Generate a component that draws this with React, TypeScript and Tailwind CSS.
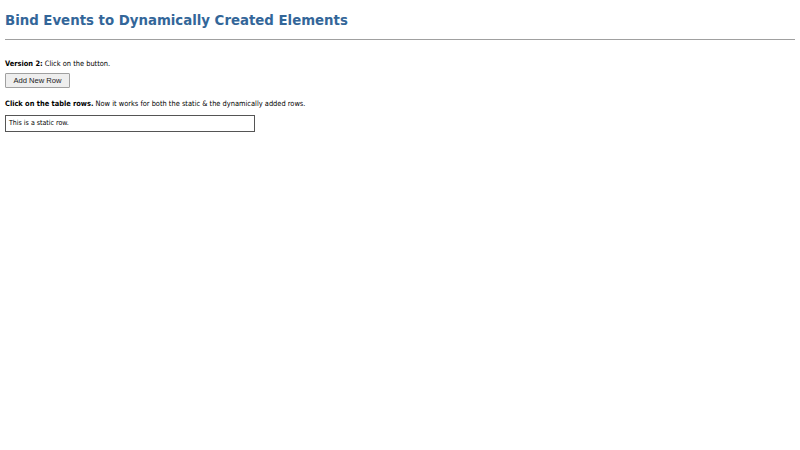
export default function App() {
  return (
    <div className="min-h-[450px] bg-white p-[5px] text-black" style={{ fontFamily: '"DejaVu Sans Condensed", "DejaVu Sans", sans-serif' }}>
      <h1 className="mt-[5px] text-[14.8px] font-bold leading-[20px] text-[#336699]">
        Bind Events to Dynamically Created Elements
      </h1>
      <hr className="mt-[9px] border-t border-[#a0a0a0]" />
      <p className="mt-[18px] text-[7.4px] leading-[11px]">
        <b>Version 2:</b> Click on the button.
      </p>
      <button
        className="mt-[4px] block h-[15px] w-[65px] rounded-[1px] border border-[#a0a0a0] bg-[#eeeeee] text-[7.6px] leading-none text-[#222]"
        style={{ fontFamily: '"Liberation Sans", Arial, sans-serif' }}
      >
        Add New Row
      </button>
      <p className="mt-[10px] text-[7.4px] leading-[11px]">
        <b>Click on the table rows.</b> Now it works for both the static &amp; the dynamically added rows.
      </p>
      <table className="mt-[6px] w-[250px] border border-[#555]">
        <tbody>
          <tr>
            <td className="h-[15px] px-[3px] text-[7px] leading-[15px]">This is a static row.</td>
          </tr>
        </tbody>
      </table>
    </div>
  )
}
